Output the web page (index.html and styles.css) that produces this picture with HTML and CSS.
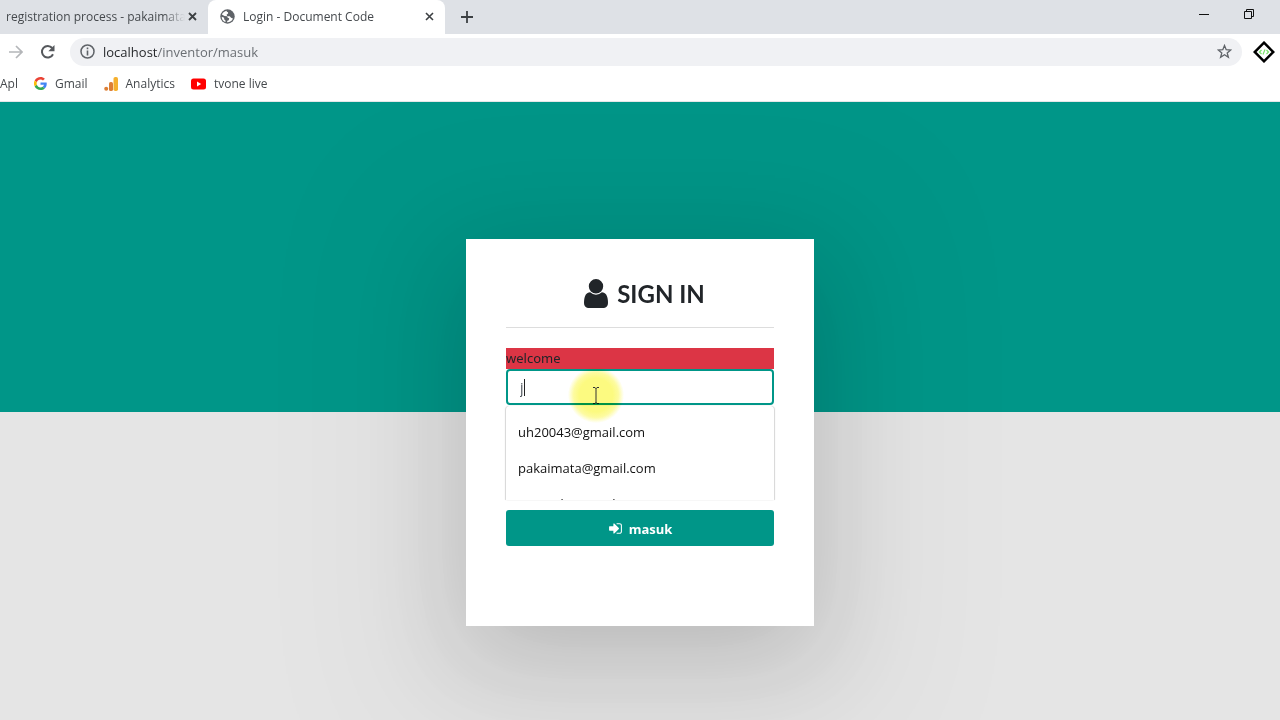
FILE: index.html
```html
<!DOCTYPE html>
<html lang="en">
<head>
<meta charset="utf-8">
<meta name="viewport" content="width=device-width, initial-scale=1">
<title>Login - Document Code</title>
<link rel="stylesheet" href="styles.css">
</head>
<body>
<header class="browser">
  <div class="tabs">
    <div class="tab tab-idle">
      <span class="tab-title tab-title-faded">registration process - pakaimata</span>
      <button class="tab-close" aria-label="Close tab"><svg width="9" height="9" viewBox="0 0 9 9"><path d="M1 1l7 7M8 1l-7 7" stroke="#3c4043" stroke-width="1.8"/></svg></button>
    </div>
    <div class="tab tab-active">
      <svg width="15" height="15" viewBox="0 0 16 16"><circle cx="8" cy="8" r="7.7" fill="#5f6368"/><path d="M7.2 1.8C5 2.1 3 3.4 2 5.8l2.8 1.600 2.800.3.6 1.600 1.600.6-.5 2-1.400.6-.5 1.700c2.800.2 5.400-1.300 6.400-4.100l-2-.7-1.400-1.700H7.700L7 6l1.600-1.200V3.400L7.200 3zM1.800 8.300c-.1 2.800 1.500 4.800 3.900 5.600l.3-1.500-1.600-1.500V9.400z" fill="#fff"/></svg>
      <span class="tab-title">Login - Document Code</span>
      <button class="tab-close" aria-label="Close tab"><svg width="9" height="9" viewBox="0 0 9 9"><path d="M1 1l7 7M8 1l-7 7" stroke="#3c4043" stroke-width="1.6"/></svg></button>
    </div>
    <button class="tab-new" aria-label="New tab"><svg width="12" height="12" viewBox="0 0 12 12"><path d="M6 0v12M0 6h12" stroke="#3c4043" stroke-width="1.8"/></svg></button>
    <div class="window-buttons">
      <button aria-label="Minimize"><svg width="11" height="11" viewBox="0 0 11 11"><path d="M0 5.500h10" stroke="#111"/></svg></button>
      <button aria-label="Restore"><svg width="11" height="11" viewBox="0 0 11 11" fill="none" stroke="#111"><path d="M.5 2.500h7v7h-7zM2.500 2.500v-2h7v7h-2"/></svg></button>
    </div>
  </div>
  <div class="toolbar">
    <button aria-label="Forward"><svg width="14" height="14" viewBox="0 0 14 14" fill="none" stroke="#b4b6b9" stroke-width="1.7"><path d="M0 7h12.500M7 1l6 6-6 6"/></svg></button>
    <button aria-label="Reload"><svg width="16" height="16" viewBox="0 0 16 16"><path d="M14 10.200A5.800 5.800 0 1 1 13.200 4" fill="none" stroke="#55585c" stroke-width="2"/><path d="M15.500 1v6.200H9.300z" fill="#55585c"/></svg></button>
    <div class="address">
      <svg width="15" height="15" viewBox="0 0 15 15"><circle cx="7.500" cy="7.500" r="6.500" fill="none" stroke="#5f6368" stroke-width="1.500"/><path d="M7.500 3.500v1.700M7.500 6.500v5" stroke="#5f6368" stroke-width="1.600"/></svg>
      <span class="url">localhost<span class="url-path">/inventor/masuk</span></span>
      <svg width="15" height="15" viewBox="0 0 15 15"><path d="M7.500 1.500l1.700 4.200 4.500.3-3.500 2.900 1.200 4.400-3.900-2.500-3.900 2.500 1.200-4.400L1.300 6l4.500-.3z" fill="none" stroke="#5f6368" stroke-width="1.300"/></svg>
    </div>
    <button class="extension" aria-label="Extension"><svg width="22" height="22" viewBox="0 0 22 22"><path d="M11 1.700l9.300 9.300-9.300 9.300L1.700 11z" fill="#fff" stroke="#000" stroke-width="2.500"/><path d="M8.500 9l-2 2 2 2M13.500 9l2 2-2 2M12 8.500l-2 5" fill="none" stroke="#7be36b" stroke-width="1.200"/></svg></button>
  </div>
  <nav class="bookmarks">
    <a href="#">Apl</a>
    <a href="#"><svg width="13" height="13" viewBox="0 0 48 48"><path fill="#ea4335" d="M24 9.500c3.500 0 6.700 1.200 9.200 3.600l6.900-6.900C35.900 2.400 30.500 0 24 0 14.600 0 6.500 5.400 2.600 13.200l8 6.200C12.400 13.700 17.700 9.500 24 9.500z"/><path fill="#4285f4" d="M47 24.500c0-1.600-.2-3.100-.4-4.500H24v9h12.900c-.6 3-2.200 5.500-4.700 7.200l7.700 6C44.400 38 47 31.800 47 24.500z"/><path fill="#fbbc05" d="M10.500 28.600a14.500 14.500 0 0 1 0-9.200l-8-6.200a24 24 0 0 0 0 21.600z"/><path fill="#34a853" d="M24 48c6.500 0 11.900-2.100 15.900-5.800l-7.700-6c-2.200 1.500-4.900 2.300-8.200 2.300-6.300 0-11.600-4.200-13.500-9.900l-8 6.200C6.500 42.600 14.600 48 24 48z"/></svg>Gmail</a>
    <a href="#"><svg width="14" height="14" viewBox="0 0 14 14"><circle cx="2.200" cy="11.800" r="2" fill="#dd7f35"/><rect x="5" y="5" width="4" height="9" rx="1.600" fill="#dd7f35"/><rect x="9.500" width="4.500" height="14" rx="1.800" fill="#f5b02e"/></svg>Analytics</a>
    <a href="#"><svg width="15" height="12" viewBox="0 0 15 12"><rect y=".5" width="15" height="11" rx="2.500" fill="#f00"/><path d="M6 3.500L10.200 6 6 8.500z" fill="#fff"/></svg>tvone live</a>
  </nav>
</header>
<main class="page">
  <form class="card">
    <h1 class="card-title"><svg width="24" height="29" viewBox="0 128 1280 1536" aria-hidden="true"><path fill="#212529" d="M1280 1399q0 109-62.500 187t-150.500 78h-854q-88 0-150.500-78t-62.500-187q0-85 8.500-160.500t31.500-152 58.500-131 94-89 134.500-34.500q131 128 313 128t313-128q76 0 134.500 34.500t94 89 58.500 131 31.500 152 8.500 160.500zm-256-887q0 159-112.500 271.500t-271.500 112.500-271.500-112.500-112.500-271.500 112.500-271.500 271.500-112.500 271.500 112.500 112.500 271.500z"/></svg>SIGN IN</h1>
    <label class="message" for="email">welcome</label>
    <div class="field">
      <input class="text-input" id="email" type="text" value="j" autocomplete="off">
      <span class="caret"></span>
      <ul class="suggestions">
        <li>uh20043@gmail.com</li>
        <li>pakaimata@gmail.com</li>
        <li>inamada@gmail.com</li>
      </ul>
      <span class="pointer"><svg width="8" height="17" viewBox="0 0 8 17"><path d="M1 .5h2l1 1 1-1h2M4 1v15M1 16.500h2l1-1 1 1h2" fill="none" stroke="#333"/></svg></span>
    </div>
    <button class="submit" type="submit"><svg width="15" height="15" viewBox="0 0 1792 1792" aria-hidden="true"><path fill="#fff" d="M1312 896q0 26-19 45l-544 544q-19 19-45 19t-45-19-19-45v-288h-448q-26 0-45-19t-19-45v-384q0-26 19-45t45-19h448v-288q0-26 19-45t45-19 45 19l544 544q19 19 19 45zm352-352v704q0 119-84.500 203.500t-203.500 84.500h-320q-13 0-22.500-9.500t-9.500-22.500q0-4-1-20t-.5-26.500 3-23.500 10-19.500 20.500-6.500h320q66 0 113-47t47-113v-704q0-66-47-113t-113-47h-312l-11.500-1-11.500-3-8-5.500-7-9-2-13.500q0-4-1-20t-.5-26.500 3-23.500 10-19.500 20.500-6.500h320q119 0 203.500 84.500t84.500 203.500z"/></svg>masuk</button>
  </form>
</main>
</body>
</html>
```
FILE: styles.css
```css
* { box-sizing: border-box; }
body {
  margin: 0;
  min-height: 100vh;
  display: flex;
  flex-direction: column;
  font-family: "Open Sans", sans-serif;
  font-size: 13px;
  color: #212529;
}
button {
  display: flex;
  align-items: center;
  justify-content: center;
  padding: 0;
  border: 0;
  background: none;
  font: inherit;
}
svg { flex: none; }

.browser {
  background: #fff;
  border-bottom: 1px solid #e4e6e8;
  font-size: 12px;
  color: #45494d;
}
.tabs {
  display: flex;
  height: 34px;
  background: #dee1e6;
}
.tab {
  display: flex;
  align-items: center;
  gap: 8px;
  padding-bottom: 1px;
}
.tab-idle {
  gap: 2px;
  width: 208px;
  padding-left: 6px;
  padding-right: 10px;
}
.tab-active {
  width: 237px;
  padding-left: 12px;
  padding-right: 10px;
  background: #fff;
  border-radius: 8px 8px 0 0;
}
.tab-title {
  flex: 1;
  overflow: hidden;
  white-space: nowrap;
}
.tab-title-faded { mask-image: linear-gradient(to right, #000 88%, transparent); }
.tab-close { width: 11px; height: 16px; }
.tab-new { width: 44px; }
.window-buttons {
  display: flex;
  gap: 34px;
  align-items: center;
  height: 28px;
  margin-left: auto;
  padding-right: 25px;
}
.toolbar {
  display: flex;
  align-items: center;
  gap: 16px;
  height: 35px;
  padding: 0 5px 0 9px;
}
.address {
  flex: 1;
  display: flex;
  align-items: center;
  gap: 8px;
  height: 28px;
  margin-left: -1px;
  padding: 0 10px;
  border-radius: 14px;
  background: #f0f1f4;
}
.url { flex: 1; font-size: 13px; color: #27292c; }
.url-path { color: #6b6f74; }
.extension { margin-left: -5px; }
.bookmarks {
  display: flex;
  align-items: center;
  gap: 16px;
  height: 32px;
  padding-bottom: 3px;
}
.bookmarks a {
  display: flex;
  align-items: center;
  gap: 8px;
  color: inherit;
  text-decoration: none;
}

.page {
  flex: 1;
  display: flex;
  align-items: flex-end;
  justify-content: center;
  padding: 0 16px 94px;
  background: linear-gradient(#009688 calc(50% + 1px), #e5e5e5 calc(50% + 1px));
  overflow: hidden;
}
.card {
  width: 348px;
  padding: 40px 40px 80px;
  background: #fff;
  box-shadow: 0 29px 148px 88px rgba(0, 0, 0, .04), 0 29px 95px 0 rgba(0, 0, 0, .16);
}
.card-title {
  display: flex;
  align-items: center;
  justify-content: center;
  gap: 9px;
  margin: 0 0 20px;
  padding: 0 0 19px 9px;
  border-bottom: 1px solid #ddd;
  font: 700 24px/29px Lato, sans-serif;
}
.message {
  display: block;
  background: #dc3545;
  font-family: "Noto Sans", sans-serif;
  line-height: 21px;
}
.field { position: relative; margin-bottom: 105px; }
.text-input {
  display: block;
  width: 100%;
  height: 36px;
  padding: 0 12px;
  border: 2px solid #009688;
  border-radius: 4px;
  background: #fff;
  font: inherit;
  font-size: 14px;
  color: #495057;
  outline: 0;
}
.caret {
  position: absolute;
  left: 18px;
  top: 10px;
  width: 1px;
  height: 17px;
  background: #222;
}
.suggestions {
  position: absolute;
  top: 37px;
  left: 0;
  right: 0;
  height: 94px;
  margin: 0;
  padding: 8px 12px 0;
  overflow: hidden;
  list-style: none;
  background: #fff;
  border-radius: 4px 4px 0 0;
  box-shadow: -1px 0 1px #d6d6d6, 1px 0 1px #d6d6d6;
  color: #111;
  line-height: 36px;
}
.pointer {
  position: absolute;
  left: 62px;
  top: -2px;
  width: 56px;
  height: 56px;
  display: flex;
  align-items: center;
  justify-content: center;
  background: radial-gradient(closest-side, #fcfa80 60%, #fdfba0 80%, transparent);
  mix-blend-mode: multiply;
}
.submit {
  gap: 6px;
  width: 100%;
  height: 36px;
  padding-top: 1px;
  border-radius: 3px;
  background: #009688;
  color: #fff;
  font-weight: 700;
}
```
